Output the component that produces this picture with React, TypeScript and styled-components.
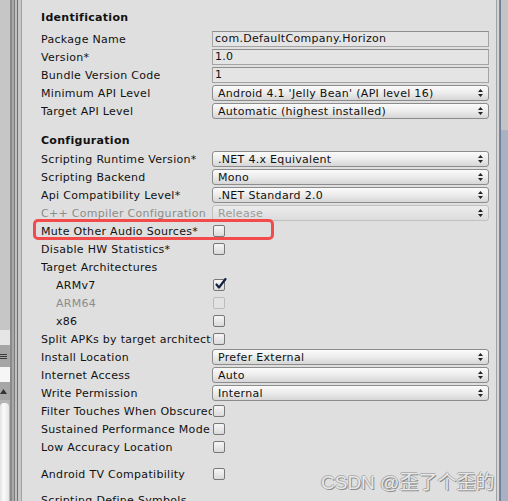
import React from "react";
import styled, { createGlobalStyle } from "styled-components";

const GlobalStyle = createGlobalStyle`
  html, body {
    margin: 0;
    padding: 0;
    background: #dfdfdf;
  }
  body {
    font-family: "DejaVu Sans", Verdana, sans-serif;
    font-size: 11px;
    letter-spacing: 0.3px;
    color: #111;
  }
`;

const Page = styled.div`
  display: flex;
  width: 508px;
  height: 501px;
  overflow: hidden;
  position: relative;
`;

const LeftStrip = styled.div`
  width: 10px;
  display: flex;
  flex-direction: column;
  background: #c6c6c6;
`;

const StripBlock = styled.div<{ $h: number; $bg: string }>`
  height: ${(p) => p.$h}px;
  flex: none;
  background: ${(p) => p.$bg};
  display: flex;
  align-items: center;
  justify-content: flex-start;
`;

const Hamburger = styled.div`
  width: 7px;
  height: 5px;
  border-top: 1px solid #3c3c3c;
  border-bottom: 1px solid #3c3c3c;
  box-sizing: border-box;
  position: relative;
  &::after {
    content: "";
    position: absolute;
    left: 0;
    right: 0;
    top: 1px;
    height: 1px;
    background: #3c3c3c;
  }
`;

const Trough = styled.div`
  flex: 1;
  background: #b4b4b4;
  padding: 3px 1px 0 0;
  display: flex;
`;

const Thumb = styled.div`
  flex: 1;
  border-radius: 4px 4px 0 0;
  background: linear-gradient(90deg, #e2e2e2, #fbfbfb 40%, #e6e6e6);
`;

const Splitter = styled.div`
  width: 12px;
  background: linear-gradient(
    90deg,
    #8a8a8a 0 2px,
    #a8a8a8 2px 4px,
    #7c7c7c 4px 5px,
    #c0c0c0 5px 7px,
    #707070 7px 8px,
    #c8c8c8 8px 11px,
    #a2a2a2 11px 12px
  );
`;

const Inspector = styled.div`
  flex: 1;
  background: #dfdfdf;
  padding: 9px 7px 0 19px;
  position: relative;
`;

const RightStrip = styled.div`
  width: 12px;
  display: flex;
  background: linear-gradient(
    90deg,
    #a2a2a2 0 1px,
    #d4d4d4 1px 3px,
    #868686 3px 4px,
    transparent 4px
  );
`;

const RightTrack = styled.div`
  margin-left: 4px;
  flex: 1;
  background: linear-gradient(180deg, #c4c4c4 0 130px, #aab2c2 130px);
  border-left: 1px solid #6e7e9e;
`;

const SectionTitle = styled.div<{ $gap?: number }>`
  height: 18px;
  line-height: 18px;
  font-weight: bold;
  margin-top: ${(p) => p.$gap ?? 0}px;
  color: #111;
`;

const Spacer = styled.div<{ $h: number }>`
  height: ${(p) => p.$h}px;
`;

const Row = styled.div<{ $gap?: number }>`
  display: grid;
  grid-template-columns: 171px 1fr;
  height: 18px;
  align-items: center;
  margin-top: ${(p) => p.$gap ?? 0}px;
  position: relative;
`;

const Label = styled.div<{ $indent?: boolean; $disabled?: boolean }>`
  white-space: nowrap;
  overflow: hidden;
  padding-left: ${(p) => (p.$indent ? 15 : 0)}px;
  color: ${(p) => (p.$disabled ? "#8c8c8c" : "#111")};
`;

const TextField = styled.div`
  height: 16px;
  box-sizing: border-box;
  border: 1px solid #a4a4a4;
  border-top-color: #8e8e8e;
  background: #e4e4e4;
  padding-left: 2px;
  line-height: 14px;
  white-space: nowrap;
  overflow: hidden;
`;

const Popup = styled.div<{ $disabled?: boolean }>`
  height: 16px;
  box-sizing: border-box;
  border: 1px solid ${(p) => (p.$disabled ? "#c0c0c0" : "#8c8c8c")};
  border-radius: 3px;
  background: ${(p) =>
    p.$disabled
      ? "linear-gradient(180deg, #ececec, #dcdcdc)"
      : "linear-gradient(180deg, #fbfbfb 0%, #ececec 50%, #d6d6d6 100%)"};
  color: ${(p) => (p.$disabled ? "#9a9a9a" : "#111")};
  display: flex;
  align-items: center;
  padding: 0 5px;
  white-space: nowrap;
  overflow: hidden;
`;

const PopupText = styled.span`
  flex: 1;
  overflow: hidden;
`;

const Box = styled.div<{ $disabled?: boolean }>`
  width: 12px;
  height: 12px;
  box-sizing: border-box;
  margin-left: 1px;
  border: 1px solid ${(p) => (p.$disabled ? "#bcbcbc" : "#777")};
  border-radius: 2px;
  background: ${(p) =>
    p.$disabled ? "#e2e2e2" : "linear-gradient(180deg, #f6f6f6, #dadada)"};
  position: relative;
  svg {
    position: absolute;
    left: 0;
    top: -2px;
  }
`;

const Highlight = styled.div`
  position: absolute;
  left: -8px;
  top: -3px;
  width: 241px;
  height: 21px;
  box-sizing: border-box;
  border: 3px solid #f24b4b;
  border-radius: 5px;
  pointer-events: none;
`;

const Watermark = styled.div`
  position: absolute;
  left: 321px;
  top: 473px;
  font-family: "Liberation Sans", "Noto Sans CJK SC", sans-serif;
  font-size: 19px;
  line-height: 19px;
  letter-spacing: 0;
  color: #e8e8e8;
  text-shadow: 1px 1px 0 #8c8c8c, -1px 0 0 #a6a6a6, 0 -1px 0 #b0b0b0;
  white-space: nowrap;
`;

const Arrows = () => (
  <svg width="5" height="8" viewBox="0 0 5 8">
    <path d="M0 3 L2.5 0 L5 3 Z M0 5 L2.5 8 L5 5 Z" fill="#222" />
  </svg>
);

const Check = () => (
  <svg width="13" height="13" viewBox="0 0 13 13">
    <path
      d="M2.5 6.5 L5 9.5 L11.5 1"
      stroke="#14233f"
      strokeWidth="2.2"
      fill="none"
      strokeLinecap="round"
      strokeLinejoin="round"
    />
  </svg>
);

type Control =
  | { kind: "text"; value: string }
  | { kind: "popup"; value: string; disabled?: boolean }
  | { kind: "check"; checked?: boolean; disabled?: boolean }
  | { kind: "none" };

interface Field {
  label: string;
  control: Control;
  indent?: boolean;
  disabled?: boolean;
  gap?: number;
  highlight?: boolean;
}

const identification: Field[] = [
  { label: "Package Name", control: { kind: "text", value: "com.DefaultCompany.Horizon" } },
  { label: "Version*", control: { kind: "text", value: "1.0" } },
  { label: "Bundle Version Code", control: { kind: "text", value: "1" } },
  { label: "Minimum API Level", control: { kind: "popup", value: "Android 4.1 'Jelly Bean' (API level 16)" } },
  { label: "Target API Level", control: { kind: "popup", value: "Automatic (highest installed)" } },
];

const configuration: Field[] = [
  { label: "Scripting Runtime Version*", control: { kind: "popup", value: ".NET 4.x Equivalent" } },
  { label: "Scripting Backend", control: { kind: "popup", value: "Mono" } },
  { label: "Api Compatibility Level*", control: { kind: "popup", value: ".NET Standard 2.0" } },
  { label: "C++ Compiler Configuration", disabled: true, control: { kind: "popup", value: "Release", disabled: true } },
  { label: "Mute Other Audio Sources*", highlight: true, control: { kind: "check" } },
  { label: "Disable HW Statistics*", control: { kind: "check" } },
  { label: "Target Architectures", control: { kind: "none" } },
  { label: "ARMv7", indent: true, control: { kind: "check", checked: true } },
  { label: "ARM64", indent: true, disabled: true, control: { kind: "check", disabled: true } },
  { label: "x86", indent: true, control: { kind: "check" } },
  { label: "Split APKs by target architecture", control: { kind: "check" } },
  { label: "Install Location", control: { kind: "popup", value: "Prefer External" } },
  { label: "Internet Access", control: { kind: "popup", value: "Auto" } },
  { label: "Write Permission", control: { kind: "popup", value: "Internal" } },
  { label: "Filter Touches When Obscured", control: { kind: "check" } },
  { label: "Sustained Performance Mode", control: { kind: "check" } },
  { label: "Low Accuracy Location", control: { kind: "check" } },
  { label: "Android TV Compatibility", gap: 9, control: { kind: "check" } },
  { label: "Scripting Define Symbols", gap: 8, control: { kind: "none" } },
];

function renderControl(c: Control) {
  switch (c.kind) {
    case "text":
      return <TextField>{c.value}</TextField>;
    case "popup":
      return (
        <Popup $disabled={c.disabled}>
          <PopupText>{c.value}</PopupText>
          <Arrows />
        </Popup>
      );
    case "check":
      return <Box $disabled={c.disabled}>{c.checked && <Check />}</Box>;
    default:
      return <span />;
  }
}

function FieldRow({ field }: { field: Field }) {
  return (
    <Row $gap={field.gap}>
      <Label $indent={field.indent} $disabled={field.disabled}>
        {field.label}
      </Label>
      {renderControl(field.control)}
      {field.highlight && <Highlight />}
    </Row>
  );
}

function App() {
  return (
    <>
      <GlobalStyle />
      <Page>
        <LeftStrip>
          <StripBlock $h={330} $bg="#c6c6c6" />
          <StripBlock $h={15} $bg="#e6e6e6" />
          <StripBlock $h={22} $bg="#a6a6a6">
            <Hamburger />
          </StripBlock>
          <StripBlock $h={15} $bg="#f6f6f6" />
          <StripBlock $h={18} $bg="#a6a6a6">
            <svg width="7" height="5" viewBox="0 0 7 5">
              <path d="M0 5 L3.5 0 L7 5 Z" fill="#333" />
            </svg>
          </StripBlock>
          <Trough>
            <Thumb />
          </Trough>
        </LeftStrip>
        <Splitter />
        <Inspector>
          <SectionTitle>Identification</SectionTitle>
          <Spacer $h={3} />
          {identification.map((f) => (
            <FieldRow key={f.label} field={f} />
          ))}
          <SectionTitle $gap={12}>Configuration</SectionTitle>
          {configuration.map((f) => (
            <FieldRow key={f.label} field={f} />
          ))}
        </Inspector>
        <RightStrip>
          <RightTrack />
        </RightStrip>
        <Watermark>CSDN @歪了个歪的</Watermark>
      </Page>
    </>
  );
}

export default App;
